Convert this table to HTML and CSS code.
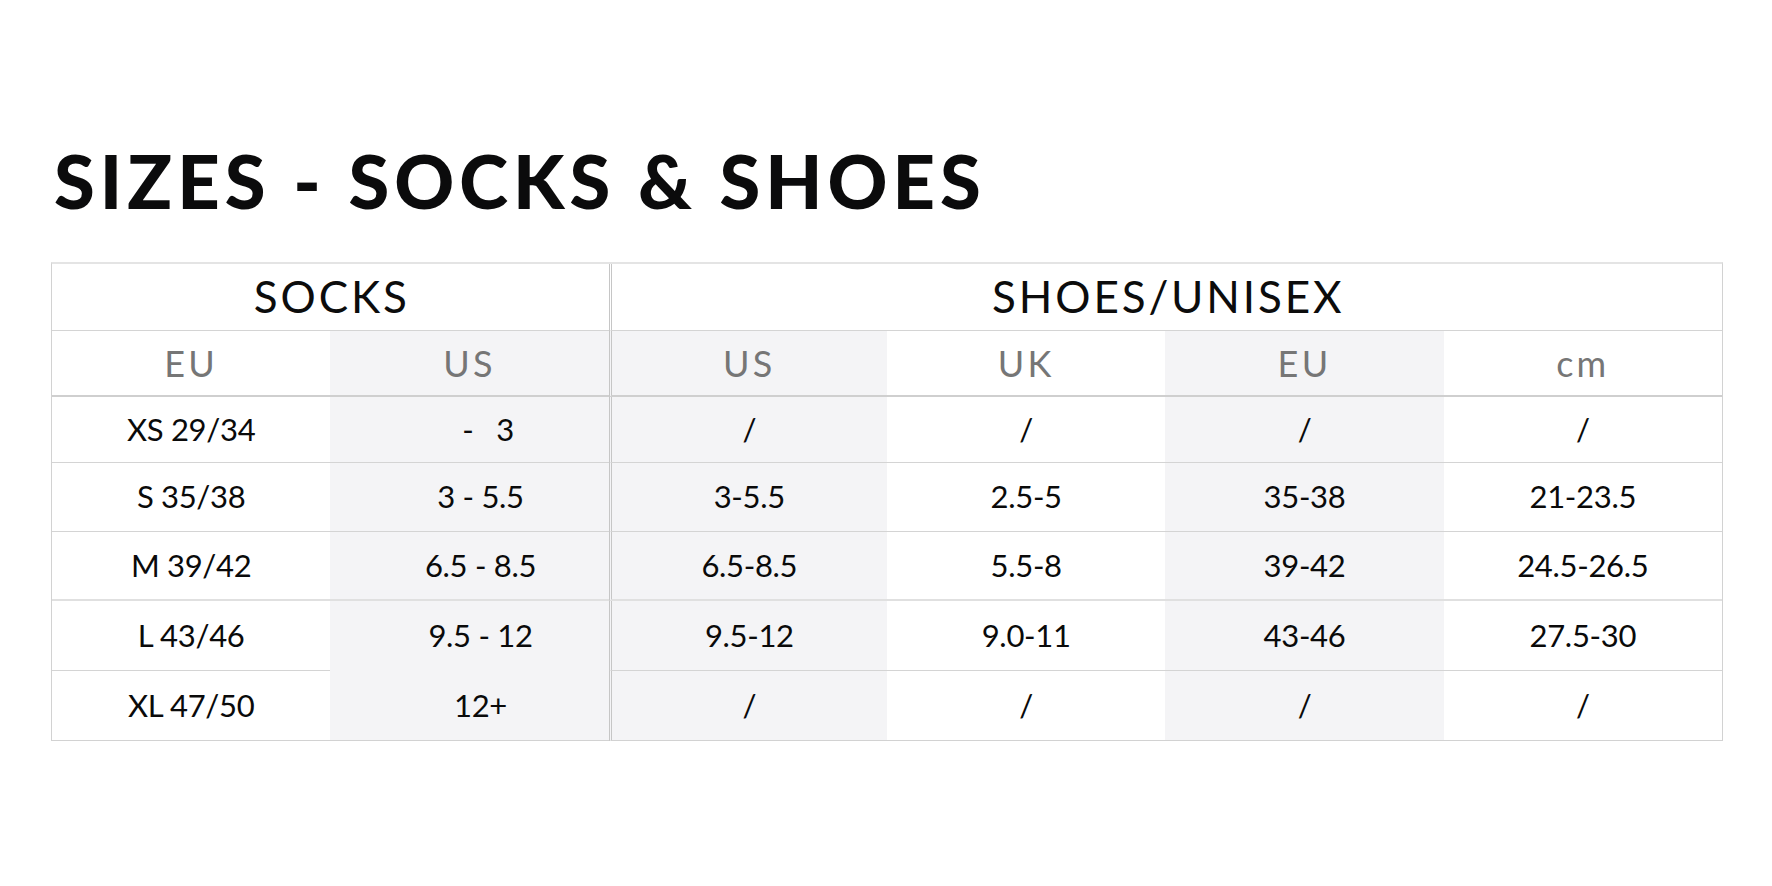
FILE: index.html
```html
<!DOCTYPE html>
<html lang="en">
<head>
<meta charset="utf-8">
<title>Sizes - Socks &amp; Shoes</title>
<link rel="stylesheet" href="styles.css">
</head>
<body>
<main class="page">
  <h1 class="title">SIZES - SOCKS &amp; SHOES</h1>
  <div class="chart">
    <div class="cell group span2">SOCKS</div>
    <div class="cell group span4 sep">SHOES/UNISEX</div>

    <div class="cell head">EU</div>
    <div class="cell head shade">US</div>
    <div class="cell head shade sep">US</div>
    <div class="cell head">UK</div>
    <div class="cell head shade">EU</div>
    <div class="cell head">cm</div>

    <div class="cell data r1">XS 29/34</div>
    <div class="cell data r1 shade socks-us">  -   3</div>
    <div class="cell data r1 shade sep">/</div>
    <div class="cell data r1">/</div>
    <div class="cell data r1 shade">/</div>
    <div class="cell data r1">/</div>

    <div class="cell data r2">S 35/38</div>
    <div class="cell data r2 shade socks-us">3 - 5.5</div>
    <div class="cell data r2 shade sep">3-5.5</div>
    <div class="cell data r2">2.5-5</div>
    <div class="cell data r2 shade">35-38</div>
    <div class="cell data r2">21-23.5</div>

    <div class="cell data r3 thick">M 39/42</div>
    <div class="cell data r3 thick shade socks-us">6.5 - 8.5</div>
    <div class="cell data r3 thick shade sep">6.5-8.5</div>
    <div class="cell data r3 thick">5.5-8</div>
    <div class="cell data r3 thick shade">39-42</div>
    <div class="cell data r3 thick">24.5-26.5</div>

    <div class="cell data r4">L 43/46</div>
    <div class="cell data r4 shade socks-us noline">9.5 - 12</div>
    <div class="cell data r4 shade sep">9.5-12</div>
    <div class="cell data r4">9.0-11</div>
    <div class="cell data r4 shade">43-46</div>
    <div class="cell data r4">27.5-30</div>

    <div class="cell data r5 last">XL 47/50</div>
    <div class="cell data r5 last shade socks-us">12+</div>
    <div class="cell data r5 last shade sep">/</div>
    <div class="cell data r5 last">/</div>
    <div class="cell data r5 last shade">/</div>
    <div class="cell data r5 last">/</div>
  </div>
</main>
</body>
</html>
```

FILE: styles.css
```css
html, body {
  margin: 0;
  padding: 0;
  background: #ffffff;
}

.page {
  padding: 144px 49px 0 51px;
  font-family: "Lato", "Noto Sans", sans-serif;
  color: #0a0a0a;
}

.title {
  margin: 0 0 44px 3px;
  font-size: 74px;
  line-height: 1;
  font-weight: 900;
  letter-spacing: 0.068em;
  color: #0b0b0c;
  white-space: nowrap;
}

.chart {
  display: grid;
  grid-template-columns: repeat(6, 1fr);
  grid-template-rows: 67px 66px 66px 69px 69px 70px 70px;
  width: 1672px;
  border-top: 2px solid #e4e4e4;
  border-left: 1px solid #d2d2d2;
  border-right: 1px solid #d2d2d2;
  box-sizing: border-box;
}

.cell {
  display: flex;
  align-items: center;
  justify-content: center;
  box-sizing: border-box;
  border-bottom: 1px solid #d4d4d4;
  white-space: pre;
}

.span2 { grid-column: span 2; }
.span4 { grid-column: span 4; }

.sep {
  border-left: 3px double #c6c6c6;
}

.shade {
  background: #f4f4f6;
}

.group {
  font-size: 44px;
  font-weight: 400;
  letter-spacing: 0.065em;
  color: #0c0c0c;
  padding-left: 0.065em;
  padding-bottom: 2px;
}

.head {
  font-size: 36px;
  font-weight: 400;
  letter-spacing: 0.09em;
  color: #767676;
  border-bottom: 2px solid #cfcfcf;
}

.data {
  font-size: 31px;
  font-weight: 400;
  color: #0a0a0a;
  letter-spacing: -0.01em;
  padding-bottom: 2px;
}

.thick {
  border-bottom: 2px solid #e0e0e0;
}

.socks-us {
  padding-left: 22px;
}

.noline {
  border-bottom-color: transparent;
}

.last {
  border-bottom: 1px solid #d2d2d2;
}
```
